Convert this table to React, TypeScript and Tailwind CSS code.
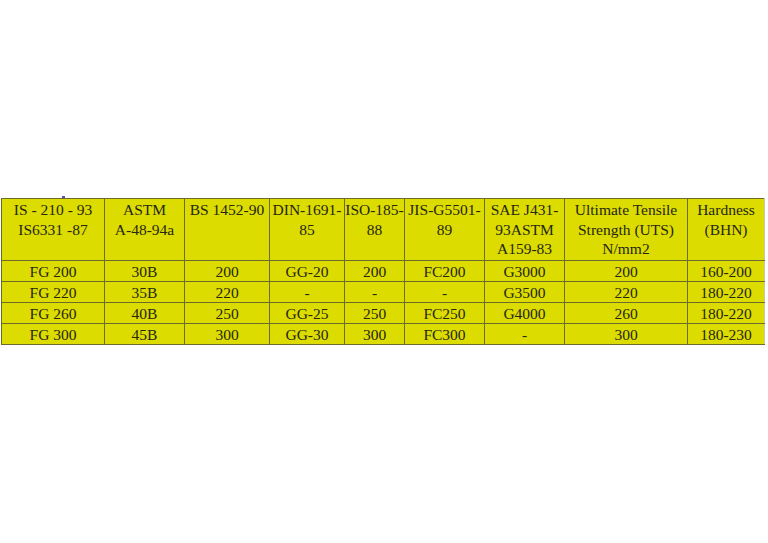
import React from "react";

const cols = [103, 80, 85, 75, 60, 80, 80, 123, 77];

const header = [
  ["IS - 210 - 93", "IS6331 -87"],
  ["ASTM", "A-48-94a"],
  ["BS 1452-90"],
  ["DIN-1691-", "85"],
  ["ISO-185-", "88"],
  ["JIS-G5501-", "89"],
  ["SAE J431-", "93ASTM", "A159-83"],
  ["Ultimate Tensile", "Strength (UTS)", "N/mm2"],
  ["Hardness", "(BHN)"],
];

const rows = [
  ["FG 200", "30B", "200", "GG-20", "200", "FC200", "G3000", "200", "160-200"],
  ["FG 220", "35B", "220", "-", "-", "-", "G3500", "220", "180-220"],
  ["FG 260", "40B", "250", "GG-25", "250", "FC250", "G4000", "260", "180-220"],
  ["FG 300", "45B", "300", "GG-30", "300", "FC300", "-", "300", "180-230"],
];

const App: React.FC = () => {
  return (
    <div className="w-[768px] h-[543px] bg-white overflow-hidden">
      <div className="relative pt-[198px] pl-[1px]">
        {/* stray mark above the table */}
        <span className="absolute left-[62px] top-[196px] w-[3px] h-[2px] bg-[#5a4cc0]" />
        <table
          className="table-fixed border-collapse bg-[#dcdc00] text-[#262612] text-[15.5px] leading-[19.5px] text-center"
          style={{ fontFamily: '"Liberation Serif", "Times New Roman", serif' }}
        >
          <colgroup>
            {cols.map((w, i) => (
              <col key={i} style={{ width: w }} />
            ))}
          </colgroup>
          <thead>
            <tr className="h-[62px]">
              {header.map((lines, i) => (
                <th
                  key={i}
                  className={`font-normal align-top pt-[1px] px-0 border border-[#6b6b2a] whitespace-nowrap ${
                    i === 8 ? "border-r-[#c8c8b0]" : ""
                  }`}
                >
                  {lines.map((l, j) => (
                    <div key={j}>{l}</div>
                  ))}
                </th>
              ))}
            </tr>
          </thead>
          <tbody>
            {rows.map((r, ri) => (
              <tr key={ri} className="h-[21px]">
                {r.map((c, ci) => (
                  <td
                    key={ci}
                    className={`p-0 border border-[#6b6b2a] whitespace-nowrap leading-[19px] ${
                      ci === 8 ? "border-r-[#c8c8b0]" : ""
                    }`}
                  >
                    {c}
                  </td>
                ))}
              </tr>
            ))}
          </tbody>
        </table>
      </div>
    </div>
  );
};

export default App;
